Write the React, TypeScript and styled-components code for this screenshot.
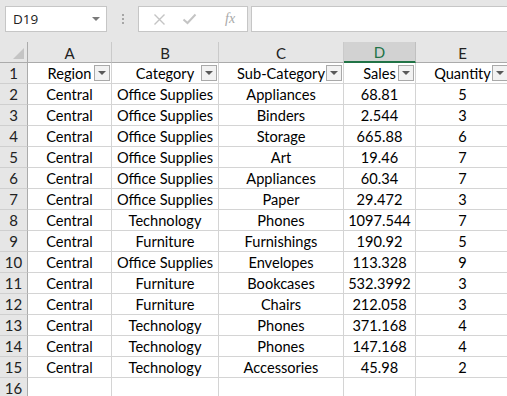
import React from "react";
import styled, { createGlobalStyle } from "styled-components";

const Global = createGlobalStyle`
  html, body { margin: 0; padding: 0; background: #ffffff; overflow: hidden; }
  * { box-sizing: border-box; }
`;

const Page = styled.div`
  width: 507px;
  height: 396px;
  overflow: hidden;
  background: #ffffff;
  display: flex;
  flex-direction: column;
`;

const FormulaBar = styled.div`
  height: 42px;
  background: #e6e6e6;
  display: flex;
  align-items: flex-start;
  padding: 6px 0 0 5px;
  flex-shrink: 0;
`;

const NameBox = styled.div`
  width: 102px;
  height: 26px;
  background: #fff;
  border: 1px solid #c6c6c6;
  display: flex;
  align-items: center;
  justify-content: space-between;
  padding: 0 6px 0 7px;
  font-family: "Open Sans", "Noto Sans", sans-serif;
  font-size: 13.5px;
  color: #222;
`;

const Caret = styled.span`
  width: 0;
  height: 0;
  border-left: 4px solid transparent;
  border-right: 4px solid transparent;
  border-top: 4px solid #7a7a7a;
`;

const Dots = styled.div`
  width: 31px;
  height: 26px;
  display: flex;
  flex-direction: column;
  align-items: center;
  justify-content: center;
  gap: 2px;
`;

const Dot = styled.span`
  width: 2px;
  height: 2px;
  background: #a6a6a6;
`;

const FxBox = styled.div`
  width: 110px;
  height: 26px;
  background: #fff;
  border: 1px solid #c6c6c6;
  display: flex;
  align-items: center;
  padding-left: 14px;
  gap: 16px;
  color: #c4c4c4;
`;

const Fx = styled.span`
  font-family: "Liberation Serif", serif;
  font-style: italic;
  font-size: 14px;
  color: #a8a8a8;
  margin-left: 12px;
`;

const FormulaInput = styled.div`
  flex: 1;
  height: 26px;
  margin-left: 3px;
  background: #fff;
  border: 1px solid #c6c6c6;
  border-right: none;
`;

const Grid = styled.div`
  display: grid;
  grid-template-columns: 28px 84px 107px 125px 72px 94px;
  grid-auto-rows: 21px;
  font-family: "Lato", "Liberation Sans", sans-serif;
  font-size: 14.6px;
  color: #000;
`;

const Corner = styled.div`
  background: #e6e6e6;
  border-right: 1px solid #ababab;
  border-bottom: 1px solid #ababab;
  position: relative;
  &::after {
    content: "";
    position: absolute;
    right: 3px;
    bottom: 3px;
    width: 0;
    height: 0;
    border-left: 11px solid transparent;
    border-bottom: 11px solid #c4c4c4;
  }
`;

const ColHead = styled.div<{ $active?: boolean }>`
  background: ${(p) => (p.$active ? "#d2d2d2" : "#e6e6e6")};
  border-right: 1px solid ${(p) => (p.$active ? "#c0c0c0" : "#cacaca")};
  border-bottom: ${(p) => (p.$active ? "2px solid #217346" : "1px solid #ababab")};
  color: ${(p) => (p.$active ? "#217346" : "#222")};
  display: flex;
  align-items: center;
  justify-content: center;
  font-size: 15px;
  padding-top: 1px;
`;

const RowHead = styled.div`
  background: #e6e6e6;
  border-right: 1px solid #ababab;
  border-bottom: 1px solid #cfcfcf;
  color: #222;
  display: flex;
  align-items: center;
  justify-content: center;
  font-size: 15px;
`;

const Cell = styled.div`
  border-right: 1px solid #d4d4d4;
  border-bottom: 1px solid #d4d4d4;
  display: flex;
  align-items: center;
  justify-content: center;
  white-space: nowrap;
  overflow: hidden;
  position: relative;
  padding-top: 1px;
`;

const FilterBtn = styled.span`
  position: absolute;
  right: 1px;
  top: 2px;
  width: 16px;
  height: 16px;
  background: #f2f2f2;
  border: 1px solid #a9a9a9;
  display: flex;
  align-items: center;
  justify-content: center;
  &::after {
    content: "";
    width: 0;
    height: 0;
    border-left: 4px solid transparent;
    border-right: 4px solid transparent;
    border-top: 4px solid #595959;
  }
`;

const cols = ["A", "B", "C", "D", "E"];
const headers = ["Region", "Category", "Sub-Category", "Sales", "Quantity"];
const rows: string[][] = [
  ["Central", "Office Supplies", "Appliances", "68.81", "5"],
  ["Central", "Office Supplies", "Binders", "2.544", "3"],
  ["Central", "Office Supplies", "Storage", "665.88", "6"],
  ["Central", "Office Supplies", "Art", "19.46", "7"],
  ["Central", "Office Supplies", "Appliances", "60.34", "7"],
  ["Central", "Office Supplies", "Paper", "29.472", "3"],
  ["Central", "Technology", "Phones", "1097.544", "7"],
  ["Central", "Furniture", "Furnishings", "190.92", "5"],
  ["Central", "Office Supplies", "Envelopes", "113.328", "9"],
  ["Central", "Furniture", "Bookcases", "532.3992", "3"],
  ["Central", "Furniture", "Chairs", "212.058", "3"],
  ["Central", "Technology", "Phones", "371.168", "4"],
  ["Central", "Technology", "Phones", "147.168", "4"],
  ["Central", "Technology", "Accessories", "45.98", "2"],
];

export default function App() {
  return (
    <Page>
      <Global />
      <FormulaBar>
        <NameBox>
          <span>D19</span>
          <Caret />
        </NameBox>
        <Dots>
          <Dot />
          <Dot />
          <Dot />
        </Dots>
        <FxBox>
          <svg width="13" height="13" viewBox="0 0 13 13">
            <path d="M1.5 1.5 L11.5 11.5 M11.5 1.5 L1.5 11.5" stroke="#c4c4c4" strokeWidth="1.4" fill="none" />
          </svg>
          <svg width="15" height="12" viewBox="0 0 15 12">
            <path d="M1.5 6.5 L5.5 10 L13.5 1.5" stroke="#c4c4c4" strokeWidth="2" fill="none" />
          </svg>
          <Fx>fx</Fx>
        </FxBox>
        <FormulaInput />
      </FormulaBar>
      <Grid>
        <Corner />
        {cols.map((c) => (
          <ColHead key={c} $active={c === "D"}>
            {c}
          </ColHead>
        ))}
        <RowHead>1</RowHead>
        {headers.map((h) => (
          <Cell key={h}>
            {h}
            <FilterBtn />
          </Cell>
        ))}
        {rows.map((r, i) => (
          <React.Fragment key={i}>
            <RowHead>{i + 2}</RowHead>
            {r.map((v, j) => (
              <Cell key={j}>{v}</Cell>
            ))}
          </React.Fragment>
        ))}
        <RowHead>16</RowHead>
        {cols.map((c) => (
          <Cell key={c} />
        ))}
      </Grid>
    </Page>
  );
}
